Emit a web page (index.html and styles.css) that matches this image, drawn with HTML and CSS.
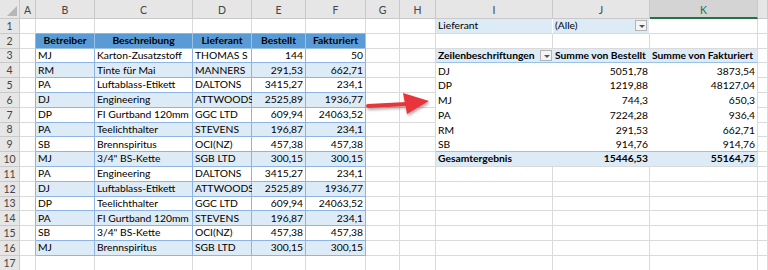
FILE: index.html
```html
<!DOCTYPE html>
<html lang="de">
<head>
    <meta charset="UTF-8">
    <title>Pivot Lieferant</title>
    <link rel="stylesheet" href="styles.css">
</head>
<body>
    <div class="sheet">
        <!-- column headers -->
        <div class="hd corner"></div><div class="hd">A</div><div class="hd">B</div><div class="hd">C</div><div class="hd">D</div><div class="hd">E</div><div class="hd">F</div><div class="hd">G</div><div class="hd">H</div><div class="hd">I</div><div class="hd">J</div><div class="hd active">K</div><div class="hd"></div>

        <!-- row 1 -->
        <div class="rh">1</div><div class="c"></div><div class="c t-top"></div><div class="c t-top"></div><div class="c t-top"></div><div class="c t-top"></div><div class="c t-top"></div><div class="c"></div><div class="c"></div>
        <div class="c pv-filter">Lieferant</div><div class="c pv-filter">(Alle)<span class="drop"></span></div><div class="c"></div><div class="c"></div>

        <!-- row 2 -->
        <div class="rh">2</div><div class="c t-left"></div><div class="c th">Betreiber</div><div class="c th">Beschreibung</div><div class="c th">Lieferant</div><div class="c th">Bestellt</div><div class="c th">Fakturiert</div><div class="c"></div><div class="c"></div><div class="c"></div><div class="c"></div><div class="c"></div><div class="c"></div>

        <!-- row 3 -->
        <div class="rh">3</div><div class="c t-left"></div><div class="c tb">MJ</div><div class="c tb">Karton-Zusatzstoff</div><div class="c tb">THOMAS S</div><div class="c tb num">144</div><div class="c tb num">50</div><div class="c"></div><div class="c"></div>
        <div class="c pv-head">Zeilenbeschriftungen<span class="drop"></span></div><div class="c pv-head">Summe von Bestellt</div><div class="c pv-head last">Summe von Fakturiert</div><div class="c"></div>

        <!-- row 4 -->
        <div class="rh">4</div><div class="c t-left"></div><div class="c tb band">RM</div><div class="c tb band">Tinte für Mai</div><div class="c tb band">MANNERS</div><div class="c tb band num">291,53</div><div class="c tb band num">662,71</div><div class="c"></div><div class="c"></div>
        <div class="c pv">DJ</div><div class="c pv num">5051,78</div><div class="c pv num last">3873,54</div><div class="c"></div>

        <!-- row 5 -->
        <div class="rh">5</div><div class="c t-left"></div><div class="c tb">PA</div><div class="c tb">Luftablass-Etikett</div><div class="c tb">DALTONS</div><div class="c tb num">3415,27</div><div class="c tb num">234,1</div><div class="c"></div><div class="c"></div>
        <div class="c pv">DP</div><div class="c pv num">1219,88</div><div class="c pv num last">48127,04</div><div class="c"></div>

        <!-- row 6 -->
        <div class="rh">6</div><div class="c t-left"></div><div class="c tb band">DJ</div><div class="c tb band">Engineering</div><div class="c tb band">ATTWOODS</div><div class="c tb band num">2525,89</div><div class="c tb band num">1936,77</div><div class="c"></div><div class="c"></div>
        <div class="c pv">MJ</div><div class="c pv num">744,3</div><div class="c pv num last">650,3</div><div class="c"></div>

        <!-- row 7 -->
        <div class="rh">7</div><div class="c t-left"></div><div class="c tb">DP</div><div class="c tb">FI Gurtband 120mm</div><div class="c tb">GGC LTD</div><div class="c tb num">609,94</div><div class="c tb num">24063,52</div><div class="c"></div><div class="c"></div>
        <div class="c pv">PA</div><div class="c pv num">7224,28</div><div class="c pv num last">936,4</div><div class="c"></div>

        <!-- row 8 -->
        <div class="rh">8</div><div class="c t-left"></div><div class="c tb band">PA</div><div class="c tb band">Teelichthalter</div><div class="c tb band">STEVENS</div><div class="c tb band num">196,87</div><div class="c tb band num">234,1</div><div class="c"></div><div class="c"></div>
        <div class="c pv">RM</div><div class="c pv num">291,53</div><div class="c pv num last">662,71</div><div class="c"></div>

        <!-- row 9 -->
        <div class="rh">9</div><div class="c t-left"></div><div class="c tb">SB</div><div class="c tb">Brennspiritus</div><div class="c tb">OCI(NZ)</div><div class="c tb num">457,38</div><div class="c tb num">457,38</div><div class="c"></div><div class="c"></div>
        <div class="c pv pv-end">SB</div><div class="c pv pv-end num">914,76</div><div class="c pv pv-end num last">914,76</div><div class="c"></div>

        <!-- row 10 -->
        <div class="rh">10</div><div class="c t-left"></div><div class="c tb band">MJ</div><div class="c tb band">3/4" BS-Kette</div><div class="c tb band">SGB LTD</div><div class="c tb band num">300,15</div><div class="c tb band num">300,15</div><div class="c"></div><div class="c"></div>
        <div class="c pv-total">Gesamtergebnis</div><div class="c pv-total num">15446,53</div><div class="c pv-total num">55164,75</div><div class="c"></div>

        <!-- row 11 -->
        <div class="rh">11</div><div class="c t-left"></div><div class="c tb">PA</div><div class="c tb">Engineering</div><div class="c tb">DALTONS</div><div class="c tb num">3415,27</div><div class="c tb num">234,1</div><div class="c"></div><div class="c"></div><div class="c"></div><div class="c"></div><div class="c"></div><div class="c"></div>

        <!-- row 12 -->
        <div class="rh">12</div><div class="c t-left"></div><div class="c tb band">DJ</div><div class="c tb band">Luftablass-Etikett</div><div class="c tb band">ATTWOODS</div><div class="c tb band num">2525,89</div><div class="c tb band num">1936,77</div><div class="c"></div><div class="c"></div><div class="c"></div><div class="c"></div><div class="c"></div><div class="c"></div>

        <!-- row 13 -->
        <div class="rh">13</div><div class="c t-left"></div><div class="c tb">DP</div><div class="c tb">Teelichthalter</div><div class="c tb">GGC LTD</div><div class="c tb num">609,94</div><div class="c tb num">24063,52</div><div class="c"></div><div class="c"></div><div class="c"></div><div class="c"></div><div class="c"></div><div class="c"></div>

        <!-- row 14 -->
        <div class="rh">14</div><div class="c t-left"></div><div class="c tb band">PA</div><div class="c tb band">FI Gurtband 120mm</div><div class="c tb band">STEVENS</div><div class="c tb band num">196,87</div><div class="c tb band num">234,1</div><div class="c"></div><div class="c"></div><div class="c"></div><div class="c"></div><div class="c"></div><div class="c"></div>

        <!-- row 15 -->
        <div class="rh">15</div><div class="c t-left"></div><div class="c tb">SB</div><div class="c tb">3/4" BS-Kette</div><div class="c tb">OCI(NZ)</div><div class="c tb num">457,38</div><div class="c tb num">457,38</div><div class="c"></div><div class="c"></div><div class="c"></div><div class="c"></div><div class="c"></div><div class="c"></div>

        <!-- row 16 -->
        <div class="rh">16</div><div class="c t-left"></div><div class="c tb band">MJ</div><div class="c tb band">Brennspiritus</div><div class="c tb band">SGB LTD</div><div class="c tb band num">300,15</div><div class="c tb band num">300,15</div><div class="c"></div><div class="c"></div><div class="c"></div><div class="c"></div><div class="c"></div><div class="c"></div>

        <!-- row 17 -->
        <div class="rh">17</div><div class="c"></div><div class="c"></div><div class="c"></div><div class="c"></div><div class="c"></div><div class="c"></div><div class="c"></div><div class="c"></div><div class="c"></div><div class="c"></div><div class="c"></div><div class="c"></div>

        <!-- callout arrow over the sheet -->
        <svg class="arrow" width="90" height="40" viewBox="0 0 90 40">
            <defs>
                <filter id="shadow" x="-20%" y="-40%" width="140%" height="180%">
                    <feDropShadow dx="1" dy="2" stdDeviation="1.5" flood-color="#000" flood-opacity="0.35"/>
                </filter>
            </defs>
            <g filter="url(#shadow)">
                <path d="M13 22 L52 20" stroke="#e8343a" stroke-width="4" stroke-linecap="round"/>
                <path d="M48 9 L74 17 L52 30 Z" fill="#e8343a"/>
            </g>
        </svg>
    </div>
</body>
</html>
```

FILE: styles.css
```css
:root {
    --grid-line: #dadada;
    --head-bg: #e6e6e6;
    --head-line: #c9c9c9;
    --head-text: #444;
    --table-head: #5b9bd5;
    --table-band: #ddebf7;
    --table-line: #8eb4e3;
    --pivot-line: #9bc2e6;
    --select-green: #217346;
}

* {
    box-sizing: border-box;
}

body {
    margin: 0;
    background: #fff;
    font-family: Lato, "Liberation Sans", sans-serif;
    font-size: 10.3px;
    color: #000;
}

.sheet {
    position: relative;
    display: grid;
    grid-template-columns: 20px 16px 59px 98px 59px 54px 60px 34px 36px 117px 97px 108px 10px;
    grid-template-rows: 19px;
    grid-auto-rows: 14.8px;
    width: 768px;
    height: 270px;
    overflow: hidden;
}

/* column / row headers */
.hd,
.rh {
    background: var(--head-bg);
    color: var(--head-text);
    border-right: 1px solid var(--head-line);
    border-bottom: 1px solid var(--head-line);
    display: flex;
    align-items: center;
    justify-content: center;
    font-size: 10.5px;
}

.hd {
    padding-top: 2px;
}

.corner {
    position: relative;
}

.corner::after {
    content: "";
    position: absolute;
    right: 2px;
    bottom: 2px;
    border-left: 10px solid transparent;
    border-bottom: 10px solid #b6b6b6;
}

.hd.active {
    background: #d4d4d4;
    color: var(--select-green);
    border-bottom: 2px solid var(--select-green);
}

/* cells */
.c {
    border-right: 1px solid var(--grid-line);
    border-bottom: 1px solid var(--grid-line);
    padding: 0 2px;
    line-height: 13.5px;
    white-space: nowrap;
    overflow: visible;
    display: flex;
    align-items: flex-end;
}

.num {
    justify-content: flex-end;
}

/* excel table B2:F16 */
.t-top {
    border-bottom-color: var(--table-line);
}

.t-left {
    border-right-color: var(--table-line);
}

.th {
    background: var(--table-head);
    border-color: var(--pivot-line);
    font-weight: 700;
    justify-content: center;
}

.tb {
    border-color: var(--table-line);
}

.band {
    background: var(--table-band);
}

/* pivot table */
.pv-filter {
    background: var(--table-band);
    border-right-color: #fff;
}

.pv-head {
    background: var(--table-band);
    font-weight: 700;
    border-right: none;
    border-bottom-color: var(--pivot-line);
    padding-right: 1px;
}

.pv {
    border-right: none;
    border-bottom: none;
}

.last {
    border-right: 1px solid var(--grid-line);
}

.pv-end {
    border-bottom: 1px solid var(--pivot-line);
}

.pv-total {
    background: var(--table-band);
    font-weight: 700;
    border-right: none;
}

.pv-total + .pv-total + .pv-total {
    border-right: 1px solid var(--grid-line);
}

.drop {
    margin-left: auto;
    align-self: center;
    width: 12px;
    height: 11px;
    border: 1px solid #b4b4b4;
    background: #f4f4f4;
    position: relative;
    flex: none;
}

.drop::after {
    content: "";
    position: absolute;
    left: 3px;
    top: 4px;
    border-left: 3px solid transparent;
    border-right: 3px solid transparent;
    border-top: 3px solid #555;
}

.arrow {
    position: absolute;
    left: 355px;
    top: 84px;
}
```
